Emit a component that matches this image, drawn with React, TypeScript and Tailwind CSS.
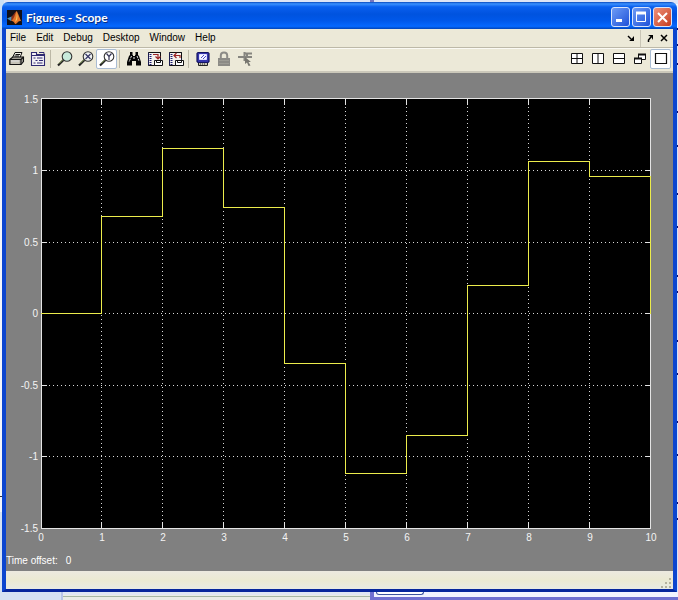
import type { ReactNode } from "react";

const menus = ["File", "Edit", "Debug", "Desktop", "Window", "Help"];

const PLOT = { left: 41, right: 651, top: 99, bottom: 528 };
const X_STEP = 61;
const Y_TICKS = [
  { label: "1.5", y: 99 },
  { label: "1", y: 170 },
  { label: "0.5", y: 242 },
  { label: "0", y: 313 },
  { label: "-0.5", y: 385 },
  { label: "-1", y: 456 },
  { label: "-1.5", y: 528 },
];
const LEVELS = [313, 216, 148, 207, 363, 473, 435, 285, 161, 176];

const signalPath =
  "M" +
  LEVELS.map((y, i) => {
    const x = PLOT.left + i * X_STEP;
    return `${x} ${y + 0.5}H${x + X_STEP}`;
  })
    .join("L") +
  "V313.5";

function ScopePlot() {
  const ticks = Array.from({ length: 11 }, (_, i) => i);
  return (
    <svg
      viewBox="6 73 667 477"
      className="block w-full text-[10px]"
      fill="none"
      role="img"
      aria-label="Scope signal"
    >
      <rect x="41" y="99" width="610" height="429" fill="#000" />
      <g stroke="#d8d8d8" strokeWidth="1" strokeDasharray="1 3" shapeRendering="crispEdges">
        {ticks.slice(1, 10).map((i) => (
          <path key={i} d={`M${PLOT.left + i * X_STEP - 0.5} 99V528`} />
        ))}
        {Y_TICKS.slice(1, 6).map((t) => (
          <path key={t.label} d={`M41 ${t.y + 0.5}H651`} />
        ))}
      </g>
      <g stroke="#e4e4e4" strokeWidth="1" shapeRendering="crispEdges">
        <path d="M41.5 98.5H650.5V528.5H41.5Z" />
        {ticks.slice(1, 10).map((i) => {
          const x = PLOT.left + i * X_STEP - 0.5;
          return <path key={i} d={`M${x} 99v6M${x} 528v-6`} />;
        })}
        {Y_TICKS.slice(1, 6).map((t) => (
          <path key={t.label} d={`M41 ${t.y + 0.5}h6M651 ${t.y + 0.5}h-6`} />
        ))}
      </g>
      <path d={signalPath} stroke="#ecec4c" strokeWidth="1" shapeRendering="crispEdges" transform="translate(-0.5 0)" />
      <g fill="#f4f4f4">
        {Y_TICKS.map((t) => (
          <text key={t.label} x="38" y={t.y + 4} textAnchor="end">
            {t.label}
          </text>
        ))}
        {ticks.map((i) => (
          <text key={i} x={PLOT.left + i * X_STEP} y="541" textAnchor="middle">
            {i}
          </text>
        ))}
      </g>
    </svg>
  );
}

function Icon({ children }: { children: ReactNode }) {
  return (
    <svg viewBox="0 0 16 16" className="h-4 w-4 shrink-0" fill="none" stroke="#111" aria-hidden="true">
      {children}
    </svg>
  );
}

function Lens({ children, fill }: { children?: ReactNode; fill: string }) {
  return (
    <Icon>
      <path d="M6.500 9L1 14.500" stroke="#222" strokeWidth="2.200" />
      <path d="M5.500 9L2 12.500" stroke="#8fa860" strokeWidth="1" />
      <circle cx="10" cy="5.500" r="4.800" fill={fill} stroke="#333" strokeWidth="1.100" />
      {children}
    </Icon>
  );
}

function DockDoc({ flip }: { flip?: boolean }) {
  return (
    <Icon>
      <path d="M1.5 1.5h12v13h-12z" fill="#f4f1ec" stroke="#1c1c50" />
      <path d="M3.5 1v14" stroke="#1c1c70" strokeWidth="2" strokeDasharray="1 1" />
      <path d="M1.5 14.5h6M1.5 1.5h12v6" stroke="#111" />
      {flip ? (
        <path d="M12 7V4.5H6M8.5 2L6 4.5L8.5 7" stroke="#9c2424" strokeWidth="1.2" />
      ) : (
        <path d="M6 3.5h5v4M8.5 5.5L11 8l2.500-2.500" stroke="#9c2424" strokeWidth="1.2" />
      )}
      <path d="M7.500 9.500h8v5h-8z" fill="#fff" />
      <path d="M9.500 9v2.500h4V9" />
    </Icon>
  );
}

const printIcon = (
  <Icon>
    <path d="M3.500 6.500L6 1.500h7L11 6.500" fill="#f5f3ea" />
    <path d="M6.500 3.500h4.500M5.500 5h4.500" />
    <path d="M.8 8.500l3-2.500H14.500v4.500L12 13.500H.8z" fill="#a5a298" strokeWidth="1.100" />
    <path d="M1 8.500h11v5M12 8.500l2.500-2.500" strokeWidth="1.100" />
    <path d="M2 10h8.500" stroke="#fff" />
    <path d="M2 12h8.500" stroke="#e5e2d5" />
  </Icon>
);
const paramsIcon = (
  <Icon>
    <path d="M1.500 4.500V1.500h5v2h8v11h-13z" fill="#f3f1f5" stroke="#302a72" strokeWidth="1.100" />
    <path d="M1.500 4.500h13M3.500 7h2M7 7h5.500M5.500 9.500h2M9 9.500h4M3.500 12h2M7 12h5.500" stroke="#302a72" />
    <path d="M9 1.500h5v2" stroke="#302a72" />
  </Icon>
);
const binocularsIcon = (
  <Icon>
    <path
      d="M4 1h2.500v3H7v1h2V4h.5V1H12v3l1 1 2 6v3.500h-5V10H6v4.500H1V11l2-6 1-1z"
      fill="#050505"
      stroke="none"
    />
    <path d="M5.500 5L3 11M11 5l2 5" stroke="#eee" strokeWidth="1" strokeDasharray="2 1" />
    <path d="M7 7h2" stroke="#eee" />
  </Icon>
);
const monitorIcon = (
  <Icon>
    <path d="M3 1.500h10l1 1v8l-1 1H3l-1-1v-8z" fill="#3434ac" stroke="#141460" strokeWidth="1.200" />
    <path d="M4.500 3.500h7v5h-7z" fill="#f6f6ff" stroke="#dedeff" />
    <path d="M6 7l3-3M8 8l3-3" stroke="#4a4aca" />
    <path d="M3.500 12v2.500h9V12" fill="#c9c6b8" stroke="#222" />
    <path d="M5 13h6" stroke="#222" strokeDasharray="1 1" />
  </Icon>
);
const lockIcon = (
  <Icon>
    <path d="M4.800 8V4.500C4.800 2.500 6 1.500 8 1.500s3.200 1 3.200 3V8" stroke="#8c8b86" strokeWidth="2" />
    <path d="M2 7h12v8H2z" fill="#8c8b86" stroke="none" />
    <path d="M3 9.500h10M3 12.500h10" stroke="#9d9c95" />
  </Icon>
);
const signalSelectIcon = (
  <Icon>
    <path d="M1 6h6M7.500 1v9M7 2.500h8M7 6h8M10 2v4" stroke="#86857f" strokeWidth="2" />
    <path d="M8 6l6 5h-2.500l2 3.500-2 .5-1.500-3.500L8 13z" fill="#77766f" stroke="none" />
  </Icon>
);

const leftGroups: { label: string; icon: ReactNode; pressed?: boolean; disabled?: boolean }[][] = [
  [
    { label: "Print", icon: printIcon },
    { label: "Parameters", icon: paramsIcon },
  ],
  [
    { label: "Zoom", icon: <Lens fill="#c8eadb" /> },
    {
      label: "Zoom X-axis",
      icon: (
        <Lens fill="#eef1ef">
          <path d="M7.500 3l5 5M12.500 3l-5 5" stroke="#333366" strokeWidth="1.200" />
        </Lens>
      ),
    },
    {
      label: "Zoom Y-axis",
      pressed: true,
      icon: (
        <Lens fill="#fff">
          <path d="M7.500 2.500L10 5.500l2.500-3M10 5.500V9" stroke="#333355" strokeWidth="1.200" />
        </Lens>
      ),
    },
  ],
  [
    { label: "Autoscale", icon: binocularsIcon },
    { label: "Save axes settings", icon: <DockDoc /> },
    { label: "Restore axes settings", icon: <DockDoc flip /> },
  ],
  [
    { label: "Floating scope", icon: monitorIcon },
    { label: "Lock axes", icon: lockIcon, disabled: true },
    { label: "Signal selection", icon: signalSelectIcon, disabled: true },
  ],
];

const layouts: { label: string; icon: ReactNode; pressed?: boolean }[] = [
  { label: "Tile", icon: <path d="M2.500 2.500h11v10h-11zM8 2.500v10M2.500 7.500h11" fill="#fff" /> },
  { label: "Left and right", icon: <path d="M2.500 2.500h11v10h-11zM8 2.500v10" fill="#fff" /> },
  { label: "Top and bottom", icon: <path d="M2.500 2.500h11v10h-11zM2.500 7.500h11" fill="#fff" /> },
  {
    label: "Float",
    icon: (
      <>
        <path d="M6.500 3.500h7v5h-7z" fill="#fff" />
        <path d="M6 3.500h8" strokeWidth="2" />
        <path d="M2.500 7.500h7v5h-7z" fill="#fff" />
        <path d="M2 7.500h8" strokeWidth="2" />
      </>
    ),
  },
  { label: "Maximize", pressed: true, icon: <path d="M2.500 2.500h11v10h-11z" fill="#fff" strokeWidth="1.200" /> },
];

function ToolButton({
  label,
  icon,
  pressed,
  disabled,
}: {
  label: string;
  icon: ReactNode;
  pressed?: boolean;
  disabled?: boolean;
}) {
  return (
    <button
      type="button"
      aria-label={label}
      aria-pressed={pressed}
      disabled={disabled}
      className={`flex h-5 w-[21px] items-center justify-center rounded-xs border ${
        pressed ? "border-[#a9bcd3] bg-white" : "border-transparent"
      }`}
    >
      {icon}
    </button>
  );
}

const captionButton =
  "flex h-5 w-[19px] items-center justify-center rounded-[3px] border border-[#d8e4fb] bg-linear-to-br";

function TitleBar() {
  return (
    <header className="flex h-[27px] items-center rounded-t-md bg-[linear-gradient(180deg,#0848bd_0%,#3b91ff_7%,#0a5fee_18%,#0053df_45%,#0058ea_70%,#0568ff_90%,#0144b8_100%)] pr-[5px] pl-[5px]">
      <svg viewBox="0 0 15 15" className="mt-1 h-[15px] w-[15px]" aria-hidden="true">
        <rect width="15" height="15" fill="#111018" />
        <path d="M0 8.500L4.500 6.500 7 9 4 11z" fill="#4c91b8" />
        <path d="M4.500 6.500C6.500 5.500 7.500 2 9.500 1L7 9 4 11z" fill="#8a3018" />
        <path d="M9.500 1c1.500 1 3 7.500 5 10.500-2-1-3 0-4.500 1.500S8 14 7.500 13 6 10.500 4 11c3-1.500 4-7 5.500-10z" fill="#e4742a" />
        <path d="M9.500 1c.5 3 .5 6-1.500 11 2-1 2.500-3 2.500-6z" fill="#f7c45a" />
      </svg>
      <h1 className="mt-1 ml-1 flex-1 font-[Lato,'Liberation_Sans',sans-serif] text-[12px] leading-4 font-bold text-white [text-shadow:1px_1px_0_#0a2f80]">
        Figures - Scope
      </h1>
      <div className="mt-0.5 flex gap-0.5">
        <button type="button" aria-label="Minimize" className={`${captionButton} from-[#6e9bf5] to-[#1f4fd8]`}>
          <svg viewBox="0 0 17 18" className="h-[18px] w-[17px]" aria-hidden="true">
            <path d="M4 12.500h6" stroke="#fff" strokeWidth="3" />
          </svg>
        </button>
        <button type="button" aria-label="Maximize" className={`${captionButton} from-[#6e9bf5] to-[#1f4fd8]`}>
          <svg viewBox="0 0 17 18" className="h-[18px] w-[17px]" fill="none" stroke="#fff" aria-hidden="true">
            <path d="M3.500 5.500h9v8h-9z" />
            <path d="M3 5h10" strokeWidth="3" />
          </svg>
        </button>
        <button type="button" aria-label="Close" className={`${captionButton} from-[#ee9078] to-[#c43a1c]`}>
          <svg viewBox="0 0 17 18" className="h-[18px] w-[17px]" aria-hidden="true">
            <path d="M4 5l9 9M13 5l-9 9" stroke="#fff" strokeWidth="2" />
          </svg>
        </button>
      </div>
    </header>
  );
}

function MenuBar() {
  return (
    <nav className="flex h-[19px] items-center border-b border-[#bdb9a8] bg-[#ece9d8] pl-1">
      <div className="flex flex-1 gap-2.5">
        {menus.map((m) => (
          <button key={m} type="button" className="leading-4 text-black">
            {m}
          </button>
        ))}
      </div>
      <button type="button" aria-label="Dock">
        <svg viewBox="0 0 10 10" className="h-2.5 w-2.5" aria-hidden="true">
          <path d="M2 3l4 4" stroke="#000" strokeWidth="1.500" />
          <path d="M8 3v5H3l2-1.500z" fill="#000" />
        </svg>
      </button>
      <span className="mx-1 h-[17px] w-px bg-[#c9c5b5]" />
      <button type="button" aria-label="Undock" className="mr-1">
        <svg viewBox="0 0 10 10" className="h-2.5 w-2.5" aria-hidden="true">
          <path d="M3.500 9V7L6 4" stroke="#000" strokeWidth="1.500" fill="none" />
          <path d="M3 2h5v5L6.500 4.500z" fill="#000" />
        </svg>
      </button>
      <button type="button" aria-label="Close figure" className="mr-1">
        <svg viewBox="0 0 10 10" className="h-2.5 w-2.5" aria-hidden="true">
          <path d="M2 2l6 6M8 2l-6 6" stroke="#000" strokeWidth="1.500" />
        </svg>
      </button>
    </nav>
  );
}

function ToolBar() {
  return (
    <div
      role="toolbar"
      className="flex h-[25px] items-start justify-between border-t border-b-2 border-t-[#fbfaf4] border-b-[#cbc8ba] bg-[#ece9d8] pr-0.5"
    >
      <div className="flex items-center">
        {leftGroups.map((group, g) => (
          <div key={group[0].label} className="flex items-center">
            {g > 0 && <span className="mr-[3px] ml-0.5 h-[18px] w-px bg-[#bcb8a6]" />}
            {group.map((b) => (
              <ToolButton key={b.label} {...b} />
            ))}
          </div>
        ))}
      </div>
      <div className="flex items-center">
        {layouts.map((l) => (
          <ToolButton key={l.label} label={l.label} pressed={l.pressed} icon={<Icon>{l.icon}</Icon>} />
        ))}
      </div>
    </div>
  );
}

const EDGE_MARKS = [29, 45, 64, 112, 146, 194, 227, 276, 292, 341, 374, 422, 455, 503, 519];

function Desktop() {
  return (
    <div aria-hidden="true" className="absolute inset-0 overflow-hidden bg-[#f3f6fc]">
      <div className="absolute top-0 left-0 h-1 w-full bg-[#dfe4f5]" />
      <div className="absolute top-0 left-[370px] h-1 w-1 bg-[#7474bf]" />
      <div className="absolute top-0 left-0 h-10 w-1 bg-[#cbdff5]" />
      <div className="absolute top-[512px] left-0 h-[88px] w-[61px] bg-[#d5e2f3]" />
      <div className="absolute top-[496px] left-0 h-px w-1 bg-[#333]" />
      <div className="absolute bottom-0 left-[63px] h-2 w-[307px] border-t-[3px] border-[#dfe7f4] bg-[#e8ece6]">
        <div className="mt-px h-px bg-[#a5b7a5]" />
      </div>
      <div className="absolute bottom-0 left-[61px] h-2 w-0.5 bg-[#b7c5e8]" />
      <div className="absolute right-0 bottom-0 left-[370px] h-2 border-b-[3px] border-l-4 border-[#7070d0] bg-[#f2f3ff]">
        <div className="ml-0.5 h-[3px] w-12 rounded-b-sm border border-t-0 border-[#3e559d] bg-white" />
      </div>
      <div className="absolute top-7 right-0 bottom-2 w-1 bg-[#d5e2fa]">
        {EDGE_MARKS.map((y) => (
          <div key={y} className="absolute right-0 h-0.5 w-0.5 bg-[#10106c]" style={{ top: y - 29 }} />
        ))}
      </div>
    </div>
  );
}

export default function App() {
  return (
    <div className="relative min-h-screen pt-0.5 pr-px pb-2 pl-0.5 font-['Liberation_Sans',Arial,sans-serif] text-[10px]">
      <Desktop />
      <main className="relative">
        <TitleBar />
        <div className="border-x-4 border-b-[3px] border-x-[#0b45cf] border-b-[#06269c]">
          <MenuBar />
          <ToolBar />
          <section className="bg-[#808080]">
            <ScopePlot />
            <div className="flex h-[21px] items-end gap-2 leading-5 text-white">
              <span>Time offset:</span>
              <output>0</output>
            </div>
          </section>
          <footer className="flex h-[18px] items-end justify-end bg-[linear-gradient(180deg,#ece9e0,#ebe9d2_50%,#e8eae4)]">
            <svg viewBox="0 0 12 12" className="h-3 w-3" fill="#b5b29e" aria-hidden="true">
              <path d="M8 1h2v2H8zM8 5h2v2H8zM4 5h2v2H4zM8 9h2v2H8zM4 9h2v2H4zM0 9h2v2H0z" />
            </svg>
          </footer>
        </div>
      </main>
    </div>
  );
}
